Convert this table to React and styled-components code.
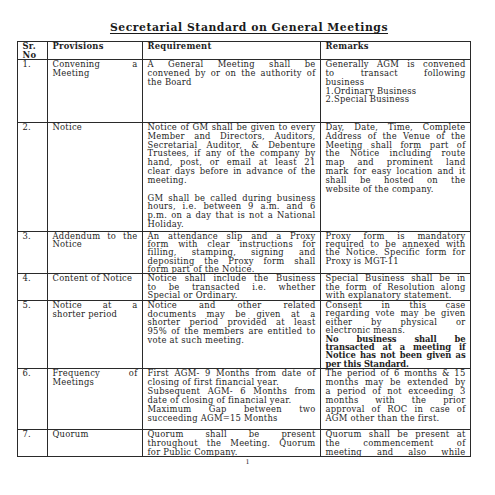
import React from "react";
import styled, { createGlobalStyle } from "styled-components";

const Global = createGlobalStyle`
  html, body { margin: 0; padding: 0; background: #fff; }
  body { font-family: "DejaVu Serif", "Liberation Serif", serif; color: #1e1e1e; }
`;

const Page = styled.div`
  width: 495px;
  height: 495px;
  overflow: hidden;
  padding-left: 17px;
  box-sizing: border-box;
  background: #fff;
`;

const Title = styled.h1`
  margin: 0 0 7px 0;
  padding-top: 21px;
  width: 453px;
  padding-left: 11px;
  box-sizing: border-box;
  text-align: center;
  font-size: 10.8px;
  line-height: 13px;
  font-weight: bold;
  text-decoration: underline;
  text-underline-offset: 1.5px;
  letter-spacing: 0.55px;
  color: #1a1a1a;
`;

const Table = styled.table`
  width: 453px;
  table-layout: fixed;
  border-collapse: collapse;
  border: 1.5px solid #2a2a2a;
`;

const Row = styled.tr`
  height: ${(p) => p.$h || "auto"};
  line-height: ${(p) => p.$lh || "8.7px"};
`;

const Cell = styled.td`
  border: 1px solid #2a2a2a;
  border-left-width: ${(p) => (p.$thick ? "1.5px" : "1px")};
  vertical-align: top;
  padding: 0 4.5px 0 4.5px;
  font-size: 8.4px;
  letter-spacing: 0.25px;
  line-height: ${(p) => p.$lh || "inherit"};
  font-weight: ${(p) => (p.$head ? "bold" : "normal")};
  overflow: hidden;
`;

const Line = styled.span`
  display: block;
  text-align: ${(p) => (p.$last ? "left" : "justify")};
  text-align-last: ${(p) => (p.$last ? "left" : "justify")};
  white-space: nowrap;
  font-weight: ${(p) => (p.$bold ? "bold" : "inherit")};
  letter-spacing: ${(p) => (p.$bold ? "-0.1px" : "inherit")};
`;

const Gap = styled.span`
  display: block;
  height: 8.7px;
`;

const PageNo = styled.div`
  width: 453px;
  padding-left: 8px;
  box-sizing: border-box;
  text-align: center;
  font-size: 6.5px;
  line-height: 9px;
  margin-top: 1px;
`;

const P = (lines, opts = {}) => ({ l: lines, ...opts });
const GAP = { gap: true };

const rows = [
  {
    h: "62.5px",
    no: "1.",
    prov: [P(["Convening a", "Meeting"])],
    req: [P(["A General Meeting shall be", "convened by or on the authority of", "the Board"])],
    rem: [
      P(["Generally AGM is convened", "to transact following", "business"]),
      P(["1.Ordinary Business"]),
      P(["2.Special Business"]),
    ],
  },
  {
    h: "109px",
    lh: "8.85px",
    no: "2.",
    prov: [P(["Notice"])],
    req: [
      P([
        "Notice of GM shall be given to every",
        "Member and Directors, Auditors,",
        "Secretarial Auditor, & Debenture",
        "Trustees, if any of the company by",
        "hand, post, or email at least 21",
        "clear days before in advance of the",
        "meeting.",
      ]),
      GAP,
      P(["GM shall be called during business", "hours, i.e. between 9 a.m. and 6", "p.m. on a day that is not a National", "Holiday."]),
    ],
    rem: [
      P([
        "Day, Date, Time, Complete",
        "Address of the Venue of the",
        "Meeting shall form part of",
        "the Notice including route",
        "map and prominent land",
        "mark for easy location and it",
        "shall be hosted on the",
        "website of the company.",
      ]),
    ],
  },
  {
    h: "42px",
    lh: "8.2px",
    no: "3.",
    prov: [P(["Addendum to the", "Notice"])],
    req: [
      P([
        "An attendance slip and a Proxy",
        "form with clear instructions for",
        "filling, stamping, signing and",
        "depositing the Proxy form shall",
        "form part of the Notice.",
      ]),
    ],
    rem: [P(["Proxy form is mandatory", "required to be annexed with", "the Notice. Specific form for", "Proxy is MGT-11"])],
  },
  {
    h: "27px",
    no: "4.",
    prov: [P(["Content of Notice"])],
    req: [P(["Notice shall include the Business", "to be transacted i.e. whether", "Special or Ordinary."])],
    rem: [P(["Special Business shall be in", "the form of Resolution along", "with explanatory statement."])],
  },
  {
    h: "68px",
    remLh: "8.4px",
    no: "5.",
    prov: [P(["Notice at a", "shorter period"])],
    req: [
      P([
        "Notice and other related",
        "documents may be given at a",
        "shorter period provided at least",
        "95% of the members are entitled to",
        "vote at such meeting.",
      ]),
    ],
    rem: [
      P(["Consent in this case", "regarding vote may be given", "either by physical or", "electronic means."]),
      P(["No business shall be", "transacted at a meeting if", "Notice has not been given as", "per this Standard."], { b: true }),
    ],
  },
  {
    h: "61px",
    lh: "8.9px",
    no: "6.",
    prov: [P(["Frequency of", "Meetings"])],
    req: [
      P(["First AGM- 9 Months from date of", "closing of first financial year."]),
      P(["Subsequent AGM- 6 Months from", "date of closing of financial year."]),
      P(["Maximum Gap between two", "succeeding AGM=15 Months"]),
    ],
    rem: [
      P([
        "The period of 6 months & 15",
        "months may be extended by",
        "a period of not exceeding 3",
        "months with the prior",
        "approval of ROC in case of",
        "AGM other than the first.",
      ]),
    ],
  },
  {
    h: "27px",
    no: "7.",
    prov: [P(["Quorum"])],
    req: [P(["Quorum shall be present", "throughout the Meeting. Quorum", "for Public Company."])],
    rem: [P(["Quorum shall be present at", "the commencement of", "meeting and also while"], { open: true })],
  },
];

function Text({ paras }) {
  return paras.map((p, i) =>
    p.gap ? (
      <Gap key={i} />
    ) : (
      p.l.map((t, j) => (
        <Line key={`${i}-${j}`} $bold={p.b} $last={j === p.l.length - 1 && !p.open}>
          {t}
        </Line>
      ))
    )
  );
}

export default function App() {
  return (
    <Page>
      <Global />
      <Title>Secretarial Standard on General Meetings</Title>
      <Table>
        <colgroup>
          <col style={{ width: "30px" }} />
          <col style={{ width: "95px" }} />
          <col style={{ width: "178px" }} />
          <col style={{ width: "150px" }} />
        </colgroup>
        <tbody>
          <Row $h="16px">
            <Cell $head>
              <Line $last>Sr.</Line>
              <Line $last>No</Line>
            </Cell>
            <Cell $head>Provisions</Cell>
            <Cell $head $thick>Requirement</Cell>
            <Cell $head>Remarks</Cell>
          </Row>
          {rows.map((r) => (
            <Row key={r.no} $h={r.h} $lh={r.lh}>
              <Cell>{r.no}</Cell>
              <Cell>
                <Text paras={r.prov} />
              </Cell>
              <Cell $thick>
                <Text paras={r.req} />
              </Cell>
              <Cell $lh={r.remLh}>
                <Text paras={r.rem} />
              </Cell>
            </Row>
          ))}
        </tbody>
      </Table>
      <PageNo>1</PageNo>
    </Page>
  );
}
